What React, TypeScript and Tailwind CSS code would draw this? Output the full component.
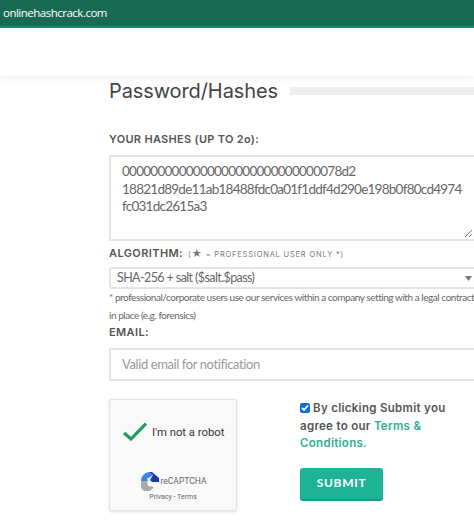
export default function App() {
  return (
    <div className="w-[474px] h-[527px] overflow-hidden bg-white font-['Lato',sans-serif] text-[#555]">
      <header className="h-[28px] bg-[#186a53] border-b-2 border-[#1f8a6c] flex items-start pl-[3px] pt-[4px]">
        <span className="font-['Open_Sans',sans-serif] text-[11.5px] tracking-[-0.5px] leading-[17px] text-white">onlinehashcrack.com</span>
      </header>
      <div className="h-[48px] shadow-[0_2px_6px_rgba(0,0,0,0.07)]" />
      <main className="pl-[109px] w-[590px]">
        <div className="flex items-center gap-[12px] h-[30px]">
          <h1 className="font-['Inter',sans-serif] text-[20px] leading-[30px] text-[#444] tracking-[-0.1px]">Password/Hashes</h1>
          <div className="h-[8px] flex-1 bg-[#efefef]" />
        </div>
        <label className="block mt-[24px] h-[18px] font-['Inter',sans-serif] font-semibold text-[11px] leading-[18px] tracking-[0.3px] text-[#555]">YOUR HASHES (UP TO 2o):</label>
        <div className="relative mt-[7px] w-[367px] h-[86px] border-2 border-[#e4e4e4] pl-[11px] pt-[6px] text-[13.5px] tracking-[-0.75px] leading-[17.5px] text-[#666]">
          <div>0000000000000000000000000000078d2</div>
          <div>18821d89de11ab18488fdc0a01f1ddf4d290e198b0f80cd4974</div>
          <div>fc031dc2615a3</div>
          <svg className="absolute right-[1px] bottom-[1px]" width="9" height="9" viewBox="0 0 9 9" fill="none" stroke="#777" strokeWidth="1">
            <path d="M1 8 8 1M5 8 8 5" />
          </svg>
        </div>
        <div className="h-[19px] leading-[19px] whitespace-nowrap">
          <span className="font-['Inter',sans-serif] font-semibold text-[11px] tracking-[0.4px] text-[#555]">ALGORITHM:</span>
          <span className="font-['Inter',sans-serif] text-[7.5px] tracking-[0.8px] text-[#777] ml-[5px]">(<span className="text-[10px]">★</span> = PROFESSIONAL USER ONLY *)</span>
        </div>
        <div className="mt-[7px] w-[400px] h-[22px] border-2 border-[#e4e4e4] rounded-[3px] flex items-center justify-between pl-[6px] pr-[35px] text-[12.5px] tracking-[-0.6px] text-[#666]">
          <span>SHA-256 + salt ($salt.$pass)</span>
          <svg width="7" height="5" viewBox="0 0 7 5"><path d="M0 0h7L3.5 5z" fill="#777" /></svg>
        </div>
        <p className="w-[365px] whitespace-nowrap text-[10px] leading-[17.5px] text-[#666] tracking-[-0.45px]">* professional/corporate users use our services within a company setting with a legal contract<br />in place (e.g. forensics)</p>
        <label className="block h-[16px] font-['Inter',sans-serif] font-semibold text-[11px] leading-[16px] tracking-[0.4px] text-[#555]">EMAIL:</label>
        <div className="mt-[8px] w-[400px] h-[33px] border-2 border-[#e4e4e4] flex items-center pl-[11px] text-[13px] tracking-[-0.4px] text-[#999]">Valid email for notification</div>
        <div className="flex mt-[18px]">
          <div className="w-[128px] h-[112px] bg-[#f9f9f9] border border-[#e4e4e4] rounded-[2px] shadow-[0_1px_3px_rgba(0,0,0,0.12)] flex flex-col font-['Roboto',sans-serif]">
            <div className="flex items-start pl-[13px] pt-[22px]">
              <svg width="24" height="19" viewBox="0 0 24 19" fill="none" stroke="#1c9c5c" strokeWidth="3.2">
                <path d="M1 11l7 6L23 1.500" />
              </svg>
              <span className="ml-[5px] mt-[4px] text-[11.3px] leading-[14px] text-[#333]">I'm not a robot</span>
            </div>
            <div className="flex items-center justify-center gap-[2px] mt-[31px] pl-[1px]">
              <svg width="18" height="19" viewBox="0 0 18 19" fill="none">
                <path d="M0 9A9 9 0 0 1 8 0l4 3-4 3-2 0 1 3z" fill="#3f83e8" />
                <path d="M8 0h3l7 6v4h-7L9 8l3-5z" fill="#1c3aa9" />
                <path d="M0 9l6 0 1 5 6 1-4 4H4a5 5 0 0 1-4-5z" fill="#aaa" />
              </svg>
              <span className="text-[8.5px] text-[#666]">reCAPTCHA</span>
            </div>
            <div className="text-center text-[7px] mt-[1px] text-[#666] leading-[10px]">Privacy - Terms</div>
          </div>
          <div className="ml-[63px] w-[160px]">
            <div className="mt-[1px] text-[11.5px] leading-[17.5px] font-['Inter',sans-serif] font-semibold tracking-[0.3px] text-[#555]">
              <span className="inline-block align-[-1px] w-[10px] h-[10px] rounded-[2px] bg-[#0b6ce8] mr-[3px] relative">
                <svg className="absolute inset-0" viewBox="0 0 10 10" fill="none" stroke="#fff" strokeWidth="1.8"><path d="M2 5l2 2 4-4.500" /></svg>
              </span>
              By clicking Submit you agree to our <span className="text-[#2fae92]">Terms &amp; Conditions.</span>
            </div>
            <button className="mt-[15px] w-[83px] h-[33px] rounded-[3px] bg-[#1eb396] border-b-2 border-[#1a9c83] text-white text-[12px] font-bold tracking-[0.7px]">SUBMIT</button>
          </div>
        </div>
      </main>
    </div>
  );
}
